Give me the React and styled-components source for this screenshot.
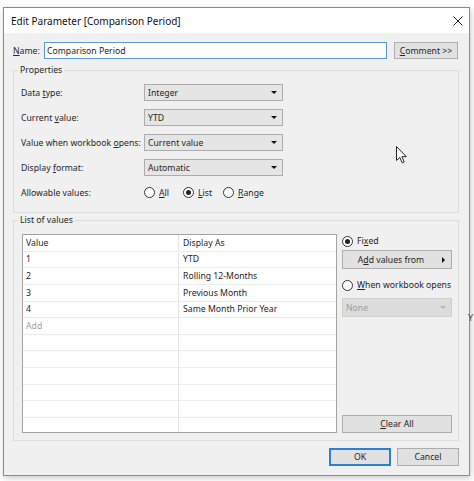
import React from "react"
import styled, { createGlobalStyle } from "styled-components"

const GlobalStyle = createGlobalStyle`
  html, body {
    margin: 0;
    padding: 0;
    background: #ffffff;
    overflow: hidden;
  }
  body {
    font-family: "Noto Sans", "Liberation Sans", sans-serif;
    font-size: 8.7px;
    color: #262626;
  }
  * { box-sizing: border-box; }
`

const Page = styled.div`
  position: relative;
  width: 474px;
  height: 481px;
  padding: 7px 0 0 3px;
`

const Dialog = styled.div`
  width: 467px;
  height: 469px;
  border: 1px solid #8c8c8c;
  background: #f0f0f0;
  box-shadow: 1px 2px 6px rgba(0, 0, 0, 0.22);
  display: flex;
  flex-direction: column;
`

const TitleBar = styled.div`
  height: 25px;
  background: #ffffff;
  display: flex;
  align-items: center;
  justify-content: space-between;
  padding-left: 7px;
`

const Title = styled.span`
  font-size: 10px;
  color: #111;
`

const CloseButton = styled.div`
  width: 22px;
  height: 25px;
  display: flex;
  align-items: center;
  justify-content: center;
`

const Body = styled.div`
  flex: 1;
  display: flex;
  flex-direction: column;
  padding: 9px 10px 0 9px;
`

const NameRow = styled.div`
  display: flex;
  align-items: center;
  height: 17px;
`

const NameLabel = styled.label`
  width: 31px;
`

const TextInput = styled.div`
  width: 343px;
  height: 17px;
  border: 1px solid #5a9ad8;
  background: #fff;
  padding-left: 2px;
  display: flex;
  align-items: center;
`

const Button = styled.div`
  width: ${p => p.$w || 64}px;
  height: ${p => p.$h || 18}px;
  margin-left: ${p => p.$ml || 0}px;
  background: #e1e1e1;
  border: 1px solid ${p => (p.$default ? "#2d7fd4" : "#adadad")};
  box-shadow: ${p => (p.$default ? "inset 0 0 0 1px #2d7fd4" : "none")};
  display: flex;
  align-items: center;
  justify-content: center;
  position: relative;
  flex-shrink: 0;
`

const Group = styled.div`
  position: relative;
  margin-top: ${p => p.$mt}px;
  height: ${p => p.$h}px;
  border: 1px solid #dcdcdc;
  padding: ${p => p.$pad};
`

const Legend = styled.span`
  position: absolute;
  top: -7px;
  left: 4px;
  padding: 0 2px;
  line-height: 13px;
  background: #f0f0f0;
`

const PropRow = styled.div`
  display: flex;
  align-items: center;
  height: 17px;
  margin-bottom: 8px;
`

const PropLabel = styled.label`
  width: 123px;
`

const Select = styled.div`
  width: ${p => p.$w || 139}px;
  height: ${p => p.$h || 17}px;
  margin-top: ${p => p.$mt || 0}px;
  background: ${p => (p.$disabled ? "#dcdcdc" : "#e5e5e5")};
  border: 1px solid ${p => (p.$disabled ? "#cfcfcf" : "#acacac")};
  color: ${p => (p.$disabled ? "#9e9e9e" : "inherit")};
  display: flex;
  align-items: center;
  justify-content: space-between;
  padding: 0 5px 0 3px;
`

const DownArrow = styled.span`
  width: 0;
  height: 0;
  border-left: 3px solid transparent;
  border-right: 3px solid transparent;
  border-top: 3px solid ${p => (p.$disabled ? "#b5b5b5" : "#111")};
`

const RightArrow = styled.span`
  position: absolute;
  right: 6px;
  top: 6px;
  width: 0;
  height: 0;
  border-top: 3px solid transparent;
  border-bottom: 3px solid transparent;
  border-left: 3px solid #111;
`

const RadioGroup = styled.div`
  display: flex;
  align-items: center;
`

const RadioOption = styled.label`
  display: flex;
  align-items: center;
  width: ${p => (p.$w ? `${p.$w}px` : "auto")};
  height: 14px;
  margin-top: ${p => p.$mt || 0}px;
`

const RadioCircle = styled.span`
  width: 11px;
  height: 11px;
  border-radius: 50%;
  border: 1px solid #333;
  background: #fff;
  margin-right: 4px;
  display: flex;
  align-items: center;
  justify-content: center;
  flex-shrink: 0;
  &::after {
    content: "";
    width: 5px;
    height: 5px;
    border-radius: 50%;
    background: ${p => (p.$checked ? "#222" : "transparent")};
  }
`

const ListContent = styled.div`
  display: flex;
  height: 199px;
`

const Table = styled.div`
  width: 315px;
  height: 199px;
  border: 1px solid #a3a3a3;
  background: #fff;
  overflow: hidden;
`

const TableRow = styled.div`
  display: grid;
  grid-template-columns: 156px 1fr;
  height: 16.65px;
  border-bottom: 1px solid #ececec;
`

const Cell = styled.div`
  padding-left: ${p => (p.$second ? 4 : 3)}px;
  border-right: ${p => (p.$second ? "none" : "1px solid #e4e4e4")};
  color: ${p => (p.$muted ? "#a0a0a0" : "inherit")};
  display: flex;
  align-items: center;
  white-space: nowrap;
`

const SidePanel = styled.div`
  width: 110px;
  margin-left: 5px;
  display: flex;
  flex-direction: column;
`

const MenuButton = styled(Button)`
  margin-top: 2px;
  padding-right: 12px;
`

const BottomButton = styled(Button)`
  margin-top: auto;
`

const Footer = styled.div`
  display: flex;
  justify-content: flex-end;
  margin-top: 7px;
`

const Cursor = styled.svg`
  position: absolute;
  left: 396px;
  top: 146px;
`

const OffscreenText = styled.span`
  position: absolute;
  left: 468px;
  top: 311px;
  font-size: 9px;
  color: #444;
`

const rows = [
  ["Value", "Display As"],
  ["1", "YTD"],
  ["2", "Rolling 12-Months"],
  ["3", "Previous Month"],
  ["4", "Same Month Prior Year"],
]

const properties = [
  [<>Data <u>t</u>ype:</>, "Integer"],
  [<>Current <u>v</u>alue:</>, "YTD"],
  [<>Value when workbook <u>o</u>pens:</>, "Current value"],
  [<>Display <u>f</u>ormat:</>, "Automatic"],
]

export default function App() {
  return (
    <>
      <GlobalStyle />
      <Page>
        <Dialog>
          <TitleBar>
            <Title>Edit Parameter [Comparison Period]</Title>
            <CloseButton>
              <svg width="10" height="10" viewBox="0 0 10 10">
                <path d="M0.5 0.5 L9.5 9.5 M9.5 0.5 L0.5 9.5" stroke="#222" strokeWidth="1" fill="none" />
              </svg>
            </CloseButton>
          </TitleBar>

          <Body>
            <NameRow>
              <NameLabel><u>N</u>ame:</NameLabel>
              <TextInput>Comparison Period</TextInput>
              <Button $w={64} $h={17} $ml={7}><u>C</u>omment &gt;&gt;</Button>
            </NameRow>

            <Group $mt={11} $h={143} $pad="13px 0 0 7px">
              <Legend>Properties</Legend>
              {properties.map(([label, value], i) => (
                <PropRow key={i}>
                  <PropLabel>{label}</PropLabel>
                  <Select>
                    {value}
                    <DownArrow />
                  </Select>
                </PropRow>
              ))}
              <PropRow>
                <PropLabel>Allowable values:</PropLabel>
                <RadioGroup>
                  <RadioOption $w={39}><RadioCircle /><u>A</u>ll</RadioOption>
                  <RadioOption $w={40}><RadioCircle $checked /><u>L</u>ist</RadioOption>
                  <RadioOption><RadioCircle /><u>R</u>ange</RadioOption>
                </RadioGroup>
              </PropRow>
            </Group>

            <Group $mt={7} $h={221} $pad="13px 6px 7px 8px">
              <Legend>List of values</Legend>
              <ListContent>
                <Table>
                  {rows.map(([a, b], i) => (
                    <TableRow key={i}>
                      <Cell>{a}</Cell>
                      <Cell $second>{b}</Cell>
                    </TableRow>
                  ))}
                  <TableRow>
                    <Cell $muted>Add</Cell>
                    <Cell $second />
                  </TableRow>
                  {Array.from({ length: 7 }).map((_, i) => (
                    <TableRow key={`e${i}`}>
                      <Cell />
                      <Cell $second />
                    </TableRow>
                  ))}
                </Table>

                <SidePanel>
                  <RadioOption><RadioCircle $checked />Fi<u>x</u>ed</RadioOption>
                  <MenuButton $w={110} $h={19}>
                    A<u>d</u>d values from
                    <RightArrow />
                  </MenuButton>
                  <RadioOption $mt={9}><RadioCircle /><u>W</u>hen workbook opens</RadioOption>
                  <Select $w={110} $h={19} $mt={6} $disabled>
                    None
                    <DownArrow $disabled />
                  </Select>
                  <BottomButton $w={110} $h={18}><u>C</u>lear All</BottomButton>
                </SidePanel>
              </ListContent>
            </Group>

            <Footer>
              <Button $w={62} $h={18} $default>OK</Button>
              <Button $w={62} $h={18} $ml={6}>Cancel</Button>
            </Footer>
          </Body>
        </Dialog>

        <Cursor width="12" height="18" viewBox="0 0 12 18">
          <path d="M0.5 0.5 L0.5 14.5 L3.8 11.4 L6.2 16.8 L8.2 15.9 L5.9 10.7 L10.3 10.7 Z" fill="#fff" stroke="#222" strokeWidth="1" strokeLinejoin="round" />
        </Cursor>
        <OffscreenText>Y</OffscreenText>
      </Page>
    </>
  )
}
